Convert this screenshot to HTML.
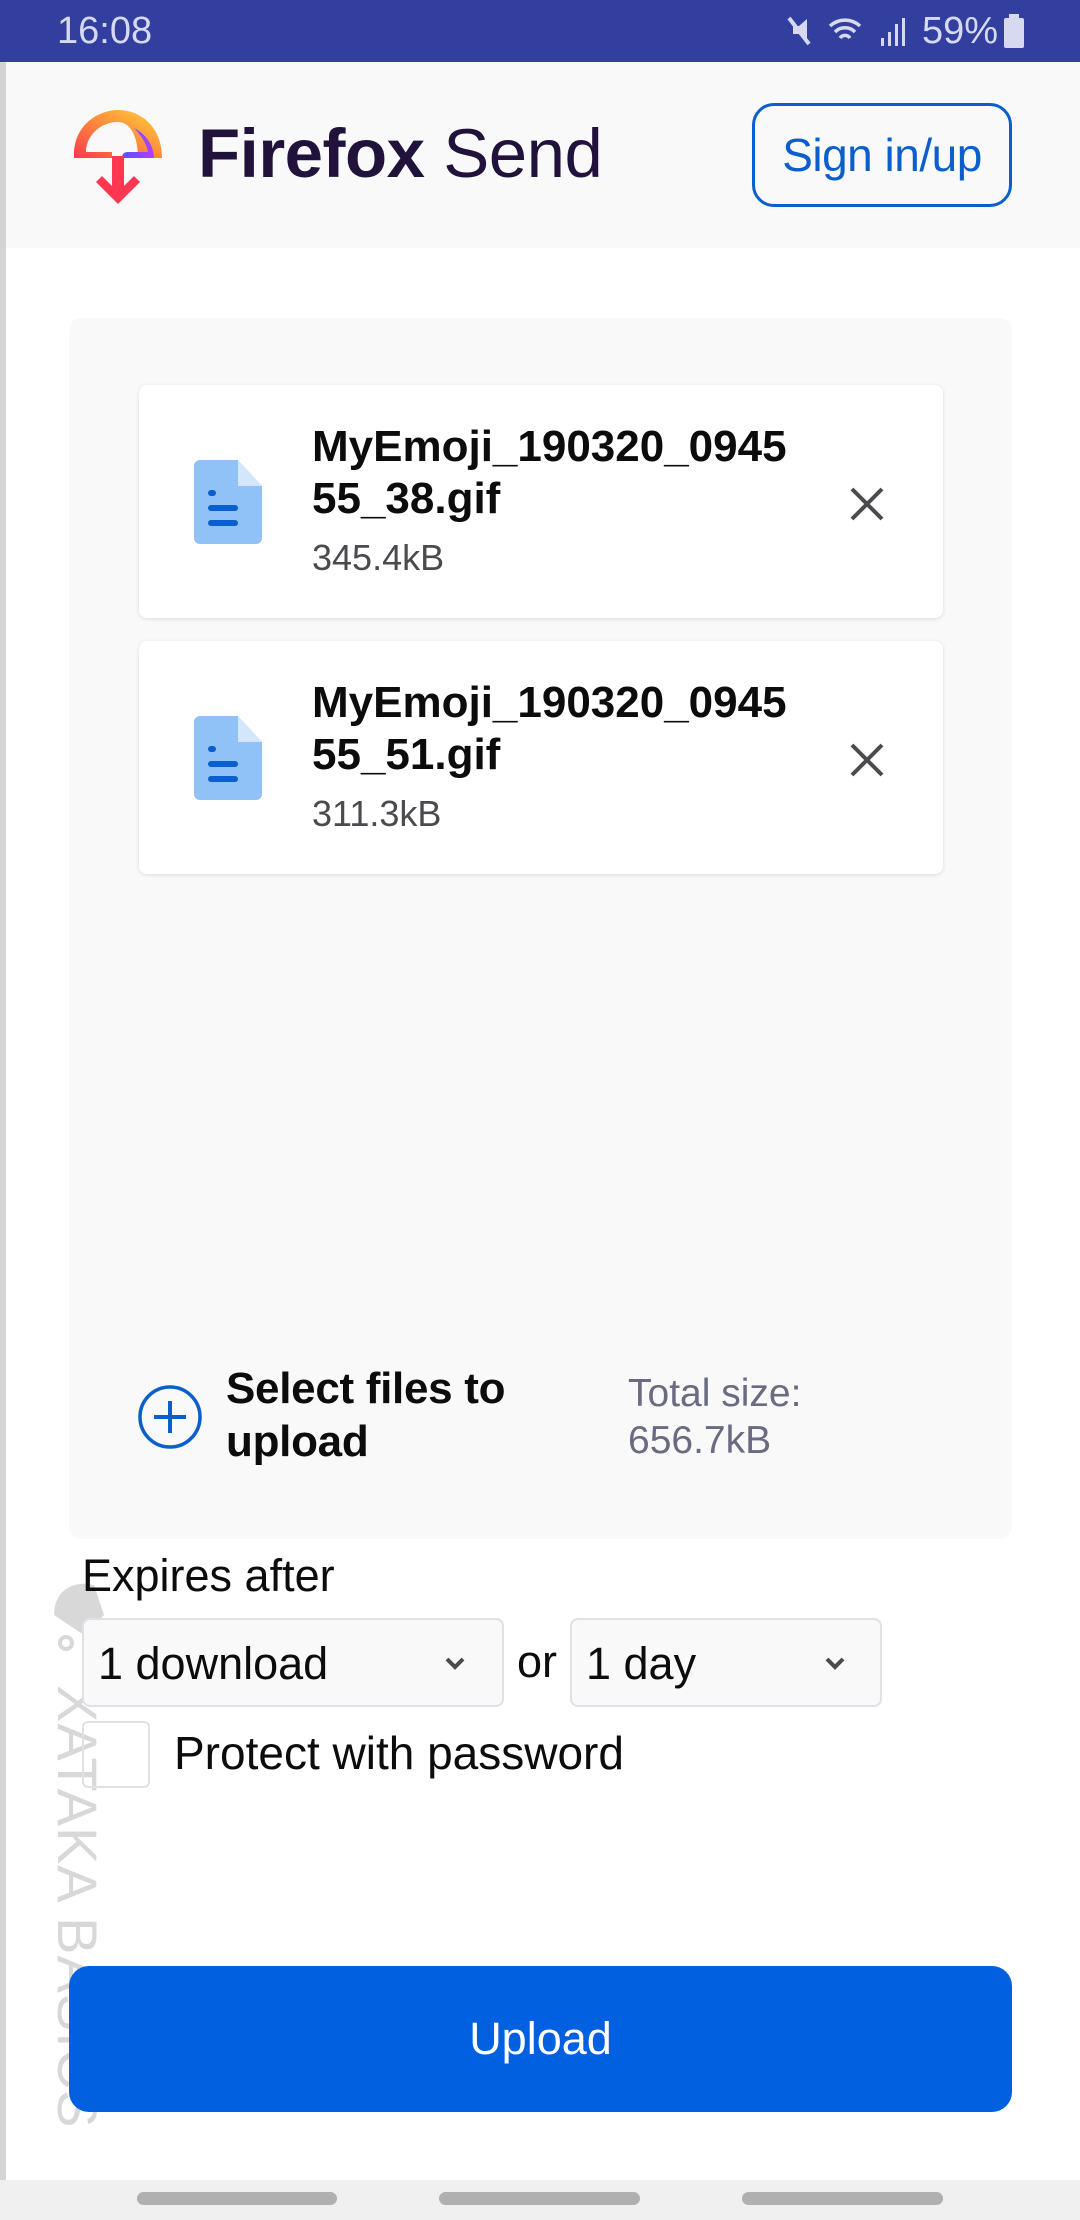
<!DOCTYPE html>
<html><head><meta charset="utf-8"><style>
*{margin:0;padding:0;box-sizing:border-box}
body{width:1080px;height:2220px;position:relative;background:#fff;font-family:"Liberation Sans",sans-serif;overflow:hidden}
.abs{position:absolute}
.status{left:0;top:0;width:1080px;height:62px;background:#323f9e;color:#d6d9f0;font-size:38px}
.header{left:0;top:62px;width:1080px;height:186px;background:#f9f9fa}
.leftline{left:0;top:62px;width:6px;height:2118px;background:#d4d4d4}
.panel{left:69px;top:318px;width:943px;height:1221px;background:#f9f9fa;border-radius:12px}
.card{left:139px;width:804px;height:233px;background:#fff;border-radius:8px;box-shadow:0 1px 4px rgba(0,0,0,.12)}
.fname{left:173px;top:36px;font-weight:bold;font-size:44px;line-height:52px;color:#0c0c0d;letter-spacing:0}
.fsize{left:173px;top:152px;font-size:36px;color:#4a4a4f}
.sel{height:89px;border:2px solid #e0e0e6;border-radius:8px;background:#f9f9fa;font-size:45px;color:#0c0c0d;padding:18px 0 0 14px}
</style></head><body>
<div class="abs status">
<div class="abs" style="left:57px;top:10px">16:08</div>
<div class="abs" style="left:922px;top:10px">59%</div>
<svg class="abs" style="left:785px;top:14px" width="130" height="34" viewBox="0 0 130 34"><path d="M4 4 L24 30" stroke="#d6d9f0" stroke-width="4"/><path d="M8 12h6l8-7v22l-8-7H8z" fill="#d6d9f0"/><path d="M45 12a22 22 0 0 1 30 0M50 18a14 14 0 0 1 20 0M55 24a6 6 0 0 1 10 0" stroke="#d6d9f0" stroke-width="3.5" fill="none"/><rect x="96" y="24" width="3" height="8" fill="#d6d9f0"/><rect x="103" y="18" width="3" height="14" fill="#d6d9f0"/><rect x="110" y="10" width="3" height="22" fill="#d6d9f0"/><rect x="117" y="4" width="3" height="28" fill="#d6d9f0"/></svg>
<svg class="abs" style="left:1003px;top:14px" width="22" height="36"><rect x="6" y="0" width="10" height="4" fill="#d6d9f0"/><rect x="1" y="4" width="20" height="30" fill="#d6d9f0" rx="2"/></svg>
</div>
<div class="abs header"></div>
<div class="abs leftline"></div>
<svg class="abs" style="left:68px;top:106px" width="100" height="100" viewBox="0 0 100 100">
<defs><linearGradient id="g" x1="0" y1="1" x2="1" y2="0"><stop offset="0" stop-color="#ff3750"/><stop offset=".5" stop-color="#ff8a3c"/><stop offset="1" stop-color="#ffd43b"/></linearGradient><linearGradient id="g2" x1="0" y1="0" x2="1" y2="0"><stop offset="0" stop-color="#5a4fff"/><stop offset="1" stop-color="#b040ff"/></linearGradient></defs>
<path d="M6 52 C4 20 30 4 50 4 C74 4 94 22 94 52 L70 52 C70 30 62 16 50 16 C32 16 18 30 18 46 L44 46 L44 52 Z" fill="url(#g)"/>
<path d="M66 22 C78 28 86 40 86 52 L54 52 C54 48 56 46 60 46 L80 46 C78 36 72 28 66 22Z" fill="url(#g2)"/>
<path d="M44 50 L56 50 L56 80 L66 70 L72 76 L50 98 L28 76 L34 70 L44 80 Z" fill="#ff3750"/>
</svg>
<div class="abs" style="left:198px;top:114px;font-size:69px;color:#20123a;letter-spacing:-0.5px"><b>Firefox</b> Send</div>
<div class="abs" style="left:752px;top:103px;width:260px;height:104px;border:3px solid #0a5fcc;border-radius:22px;color:#0a5fcc;font-size:46px;text-align:center;line-height:98px;letter-spacing:-0.5px">Sign in/up</div>
<div class="abs panel"></div>
<div class="abs card" style="top:385px">
<svg class="abs" style="left:55px;top:75px" width="68" height="84" viewBox="0 0 68 84"><path d="M6 0H44L68 26V78a6 6 0 0 1-6 6H6a6 6 0 0 1-6-6V6a6 6 0 0 1 6-6z" fill="#90c2f8"/><path d="M44 0V26H68" fill="#fff" opacity=".6"/><rect x="14" y="30" width="8" height="6" rx="3" fill="#0a5fcc"/><rect x="14" y="45" width="30" height="6" rx="3" fill="#0a5fcc"/><rect x="14" y="60" width="30" height="6" rx="3" fill="#0a5fcc"/></svg>
<div class="abs fname">MyEmoji_190320_0945<br>55_38.gif</div>
<div class="abs fsize">345.4kB</div>
<svg class="abs" style="left:710px;top:101px" width="36" height="36"><path d="M3 3L33 33M33 3L3 33" stroke="#4a4a4f" stroke-width="4"/></svg>
</div>
<div class="abs card" style="top:641px">
<svg class="abs" style="left:55px;top:75px" width="68" height="84" viewBox="0 0 68 84"><path d="M6 0H44L68 26V78a6 6 0 0 1-6 6H6a6 6 0 0 1-6-6V6a6 6 0 0 1 6-6z" fill="#90c2f8"/><path d="M44 0V26H68" fill="#fff" opacity=".6"/><rect x="14" y="30" width="8" height="6" rx="3" fill="#0a5fcc"/><rect x="14" y="45" width="30" height="6" rx="3" fill="#0a5fcc"/><rect x="14" y="60" width="30" height="6" rx="3" fill="#0a5fcc"/></svg>
<div class="abs fname">MyEmoji_190320_0945<br>55_51.gif</div>
<div class="abs fsize">311.3kB</div>
<svg class="abs" style="left:710px;top:101px" width="36" height="36"><path d="M3 3L33 33M33 3L3 33" stroke="#4a4a4f" stroke-width="4"/></svg>
</div>
<svg class="abs" style="left:137px;top:1384px" width="66" height="66"><circle cx="33" cy="33" r="30" stroke="#0a5fcc" stroke-width="3.5" fill="none"/><path d="M33 17V49M17 33H49" stroke="#0a5fcc" stroke-width="4"/></svg>
<div class="abs" style="left:226px;top:1362px;font-size:44px;font-weight:bold;line-height:53px;color:#0c0c0d;letter-spacing:-0.3px">Select files to<br>upload</div>
<div class="abs" style="left:628px;top:1370px;font-size:39px;line-height:47px;color:#6a6a80">Total size:<br>656.7kB</div>
<svg class="abs" style="left:44px;top:1575px" width="70" height="80"><path d="M10 40 C10 15 30 5 50 10 L60 40 L40 60 Z" fill="#d8d8d8"/><circle cx="22" cy="68" r="6" stroke="#d8d8d8" stroke-width="4" fill="none"/></svg>
<div class="abs" style="left:50px;top:1685px;width:60px;height:460px;color:#d8d8d8;font-size:56px;writing-mode:vertical-rl;letter-spacing:1px">XATAKA BASICS</div>
<div class="abs" style="left:82px;top:1550px;font-size:45px;color:#0c0c0d">Expires after</div>
<div class="abs sel" style="left:82px;top:1618px;width:422px">1 download<svg class="abs" style="left:360px;top:36px" width="22" height="14"><path d="M3 3L11 11L19 3" stroke="#4a4a4f" stroke-width="4" fill="none"/></svg></div>
<div class="abs" style="left:517px;top:1636px;font-size:45px;color:#0c0c0d">or</div>
<div class="abs sel" style="left:570px;top:1618px;width:312px">1 day<svg class="abs" style="left:252px;top:36px" width="22" height="14"><path d="M3 3L11 11L19 3" stroke="#4a4a4f" stroke-width="4" fill="none"/></svg></div>
<div class="abs" style="left:82px;top:1721px;width:68px;height:67px;border:2px solid #e0e0e6;border-radius:6px"></div>
<div class="abs" style="left:174px;top:1726px;font-size:46px;color:#0c0c0d">Protect with password</div>
<div class="abs" style="left:69px;top:1966px;width:943px;height:146px;background:#0060df;border-radius:20px;color:#fff;font-size:45px;text-align:center;line-height:146px">Upload</div>
<div class="abs" style="left:0;top:2180px;width:1080px;height:40px;background:#f0f0f0"></div>
<div class="abs" style="left:137px;top:2192px;width:200px;height:13px;border-radius:7px;background:#b0b0b0"></div>
<div class="abs" style="left:439px;top:2192px;width:201px;height:13px;border-radius:7px;background:#b0b0b0"></div>
<div class="abs" style="left:742px;top:2192px;width:201px;height:13px;border-radius:7px;background:#b0b0b0"></div>
</body></html>
